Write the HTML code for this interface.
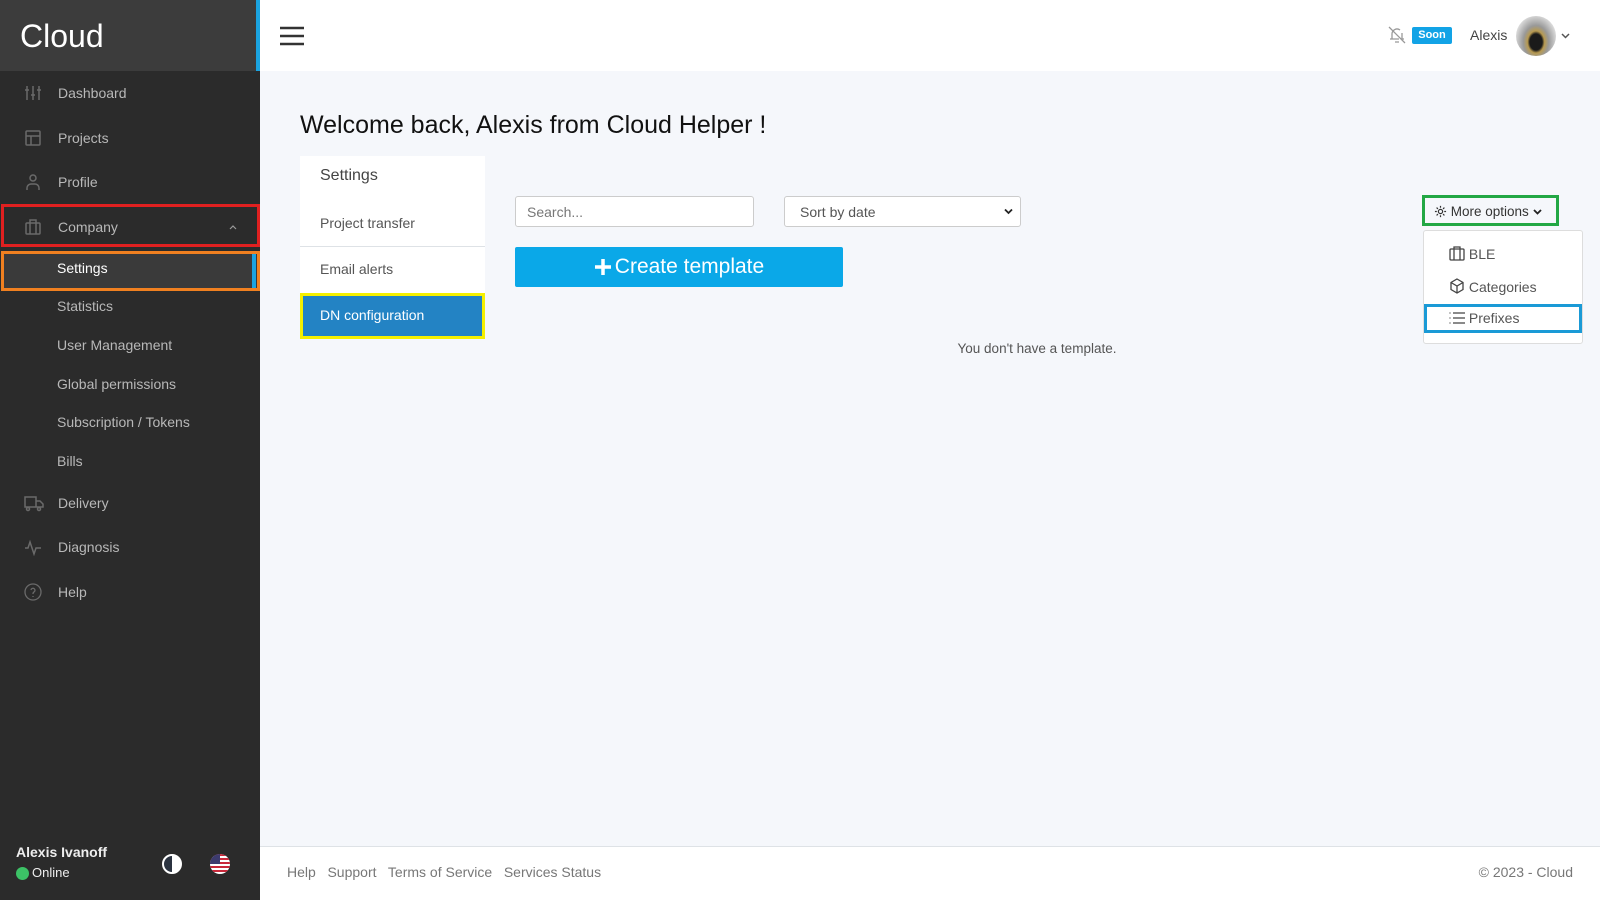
<!DOCTYPE html>
<html><head><meta charset="utf-8"><style>
*{box-sizing:border-box;margin:0;padding:0}
body{width:1600px;height:900px;overflow:hidden;background:#f5f7fb;font-family:"Liberation Sans",sans-serif;position:relative;color:#333}
.abs{position:absolute}
#side{left:0;top:0;width:260px;height:900px;background:#2b2b2b}
#logo{left:0;top:0;width:256px;height:71px;background:#3c3c3c;color:#fff;font-size:32px;padding:18px 0 0 20px}
#strip{left:256px;top:0;width:4px;height:71px;background:#1aa3e0}
.nav{position:absolute;left:0;width:260px;color:#b8b8b8;font-size:14px;line-height:18px}
.nav svg{position:absolute;left:24px;top:0}
.nav span{position:absolute;left:58px}
.sub span{left:57px}
#top{left:260px;top:0;width:1340px;height:71px;background:#fff}
#foot{left:260px;top:846px;width:1340px;height:54px;background:#fff;border-top:1px solid #dee2e6}
</style></head><body>
<div id="side" class="abs"></div>
<div id="logo" class="abs">Cloud</div>
<div id="strip" class="abs"></div>

<div class="nav" style="top:84px"><svg width="18" height="18" viewBox="0 0 18 18" fill="none" stroke="#6a6a6a" stroke-width="1.5"><path d="M3 2v14M9 2v14M15 2v14M1 6h4M7 11h4M13 6h4"/></svg><span>Dashboard</span></div>
<div class="nav" style="top:129px"><svg width="18" height="18" viewBox="0 0 18 18" fill="none" stroke="#6a6a6a" stroke-width="1.5"><rect x="2" y="2" width="14" height="14" rx="1"/><path d="M2 7h14M7 7v9"/></svg><span>Projects</span></div>
<div class="nav" style="top:173px"><svg width="18" height="18" viewBox="0 0 18 18" fill="none" stroke="#6a6a6a" stroke-width="1.5"><circle cx="9" cy="5" r="3"/><path d="M3 17v-2a4 4 0 0 1 4-4h4a4 4 0 0 1 4 4v2"/></svg><span>Profile</span></div>
<div class="abs" style="left:1px;top:204px;width:259px;height:43px;border:3px solid #e02020"></div>
<div class="nav" style="top:218px"><svg width="18" height="18" viewBox="0 0 18 18" fill="none" stroke="#6a6a6a" stroke-width="1.5"><rect x="2" y="5" width="14" height="11" rx="1"/><path d="M6 5V2h6v3M6 5v11M12 5v11"/></svg><span>Company</span><svg style="left:229px;top:6px" width="8" height="6" viewBox="0 0 8 6" fill="none" stroke="#999" stroke-width="1.2"><path d="M1 5l3-3 3 3"/></svg></div>
<div class="abs" style="left:1px;top:251px;width:259px;height:40px;background:#3a3a3a;border:3px solid #f08020"></div>
<div class="abs" style="left:252px;top:254px;width:4px;height:34px;background:#1aa3e0"></div>
<div class="nav sub" style="top:259px;color:#fff"><span>Settings</span></div>
<div class="nav sub" style="top:297px"><span>Statistics</span></div>
<div class="nav sub" style="top:336px"><span>User Management</span></div>
<div class="nav sub" style="top:375px"><span>Global permissions</span></div>
<div class="nav sub" style="top:413px"><span>Subscription / Tokens</span></div>
<div class="nav sub" style="top:452px"><span>Bills</span></div>
<div class="nav" style="top:494px"><svg width="20" height="18" viewBox="0 0 20 18" fill="none" stroke="#6a6a6a" stroke-width="1.5"><path d="M1 3h11v10H1zM12 7h4l3 3v3h-7"/><circle cx="4" cy="15" r="1.5"/><circle cx="15" cy="15" r="1.5"/></svg><span>Delivery</span></div>
<div class="nav" style="top:538px"><svg width="18" height="18" viewBox="0 0 18 18" fill="none" stroke="#6a6a6a" stroke-width="1.5"><path d="M1 10h3l2-6 4 12 2-6h5"/></svg><span>Diagnosis</span></div>
<div class="nav" style="top:583px"><svg width="18" height="18" viewBox="0 0 18 18" fill="none" stroke="#6a6a6a" stroke-width="1.3"><circle cx="9" cy="9" r="8"/><path d="M7 7a2 2 0 1 1 3 2c-1 .5-1 1-1 2M9 13v1"/></svg><span>Help</span></div>

<div class="abs" style="left:16px;top:844px;color:#eee;font-size:14px;font-weight:bold">Alexis Ivanoff</div>
<div class="abs" style="left:16px;top:867px;width:13px;height:13px;border-radius:50%;background:#3cc266"></div>
<div class="abs" style="left:32px;top:865px;color:#eee;font-size:13px">Online</div>
<div class="abs" style="left:162px;top:854px;width:20px;height:20px;border-radius:50%;border:2px solid #fff;background:linear-gradient(90deg,#2b3340 50%,#fff 50%)"></div>
<svg class="abs" style="left:210px;top:854px" width="20" height="20" viewBox="0 0 20 20"><clipPath id="c"><circle cx="10" cy="10" r="10"/></clipPath><g clip-path="url(#c)"><rect width="20" height="20" fill="#fff"/><g fill="#c8283a"><rect y="0" width="20" height="2"/><rect y="4" width="20" height="2"/><rect y="8" width="20" height="2"/><rect y="12" width="20" height="2"/><rect y="16" width="20" height="2"/></g><rect width="10" height="10" fill="#3c3b6e"/></g></svg>

<div id="top" class="abs"></div>
<svg class="abs" style="left:280px;top:26px" width="24" height="20"><path d="M0 2h24M0 10h24M0 18h24" stroke="#333" stroke-width="2.5"/></svg>
<svg class="abs" style="left:1387px;top:25px" width="20" height="20" viewBox="0 0 20 20" fill="none" stroke="#999" stroke-width="1.3"><path d="M5 14V9a5 5 0 0 1 8-4M15 8v6h2M3 14h9M8 17h4M2 2l16 16"/></svg>
<div class="abs" style="left:1412px;top:27px;width:40px;height:17px;background:#12a3e6;color:#fff;font-size:11px;font-weight:bold;text-align:center;line-height:17px;border-radius:2px">Soon</div>
<div class="abs" style="left:1470px;top:27px;font-size:14px;color:#444">Alexis</div>
<div class="abs" style="left:1516px;top:16px;width:40px;height:40px;border-radius:50%;background:radial-gradient(ellipse at 50% 65%,#1a1a1a 22%,#b89a50 30%,#999 45%,#ddd 75%)"></div>
<svg class="abs" style="left:1561px;top:33px" width="9" height="6" viewBox="0 0 9 6" fill="none" stroke="#555" stroke-width="1.5"><path d="M1 1l3.5 3.5L8 1"/></svg>

<div class="abs" style="left:300px;top:111px;font-size:25px;color:#111">Welcome back, Alexis from Cloud Helper !</div>

<div class="abs" style="left:300px;top:156px;width:185px;height:183px;background:#fff"></div>
<div class="abs" style="left:320px;top:167px;font-size:16px;color:#444">Settings</div>
<div class="abs" style="left:320px;top:215px;font-size:14px;color:#555">Project transfer</div>
<div class="abs" style="left:300px;top:246px;width:185px;height:1px;background:#dee2e6"></div>
<div class="abs" style="left:320px;top:261px;font-size:14px;color:#555">Email alerts</div>
<div class="abs" style="left:300px;top:293px;width:185px;height:46px;background:#2383c4;border:3px solid #f5f000"></div>
<div class="abs" style="left:320px;top:307px;font-size:14px;color:#fff">DN configuration</div>

<div class="abs" style="left:515px;top:196px;width:239px;height:31px;background:#fff;border:1px solid #ccc;border-radius:3px;padding:7px 11px;font-size:14px;color:#777">Search...</div>
<div class="abs" style="left:784px;top:196px;width:237px;height:31px;background:#fff;border:1px solid #ccc;border-radius:3px;padding:7px 15px;font-size:14px;color:#555">Sort by date<svg style="position:absolute;right:7px;top:11px" width="9" height="7" viewBox="0 0 9 7" fill="none" stroke="#222" stroke-width="1.8"><path d="M1 1.5l3.5 3.5L8 1.5"/></svg></div>
<div class="abs" style="left:515px;top:247px;width:328px;height:40px;background:#0aa8e8;border-radius:2px;color:#fff;font-size:21px;display:flex;align-items:center;justify-content:center"><svg width="18" height="18" viewBox="0 0 18 18" style="margin-right:3px"><path d="M9 1v16M1 9h16" stroke="#fff" stroke-width="3.5"/></svg>Create template</div>
<div class="abs" style="left:937px;top:341px;width:200px;text-align:center;font-size:13.5px;color:#555">You don't have a template.</div>

<div class="abs" style="left:1422px;top:195px;width:137px;height:31px;border:3px solid #22a744;font-size:13.5px;color:#333;padding:6px 0 0 9px"><svg style="vertical-align:-2px" width="13" height="13" viewBox="0 0 14 14" fill="none" stroke="#333" stroke-width="1.3"><circle cx="7" cy="7" r="2.3"/><path d="M7 1v2M7 11v2M1 7h2M11 7h2M2.8 2.8l1.4 1.4M9.8 9.8l1.4 1.4M2.8 11.2l1.4-1.4M9.8 4.2l1.4-1.4"/></svg> More options <svg style="vertical-align:1px" width="9" height="6" viewBox="0 0 9 6" fill="none" stroke="#222" stroke-width="1.8"><path d="M1 1l3.5 3.5L8 1"/></svg></div>
<div class="abs" style="left:1423px;top:230px;width:160px;height:114px;background:#fff;border:1px solid #ddd;border-radius:3px"></div>
<div class="abs" style="left:1449px;top:246px;font-size:14px;color:#555"><svg style="vertical-align:-2px" width="16" height="15" viewBox="0 0 16 15" fill="none" stroke="#444" stroke-width="1.3"><rect x="1" y="3" width="14" height="11" rx="1"/><path d="M5 3V1h6v2M5 3v11M11 3v11"/></svg> BLE</div>
<div class="abs" style="left:1449px;top:278px;font-size:14px;color:#555"><svg style="vertical-align:-2px" width="16" height="16" viewBox="0 0 16 16" fill="none" stroke="#444" stroke-width="1.3"><path d="M8 1l6 3.5v7L8 15l-6-3.5v-7zM2 4.5L8 8l6-3.5M8 8v7"/></svg> Categories</div>
<div class="abs" style="left:1424px;top:304px;width:158px;height:29px;border:3px solid #1a9ad6"></div>
<div class="abs" style="left:1449px;top:310px;font-size:14px;color:#555"><svg style="vertical-align:-1px" width="16" height="12" viewBox="0 0 16 12" fill="none" stroke="#444" stroke-width="1.3"><path d="M4 1h12M4 6h12M4 11h12M0.5 1h1M0.5 6h1M0.5 11h1"/></svg> Prefixes</div>

<div id="foot" class="abs"></div>
<div class="abs" style="left:287px;top:864px;font-size:14px;color:#777">Help&nbsp;&nbsp; Support&nbsp;&nbsp; Terms of Service&nbsp;&nbsp; Services Status</div>
<div class="abs" style="right:27px;top:864px;font-size:14px;color:#777">© 2023 - Cloud</div>
</body></html>
